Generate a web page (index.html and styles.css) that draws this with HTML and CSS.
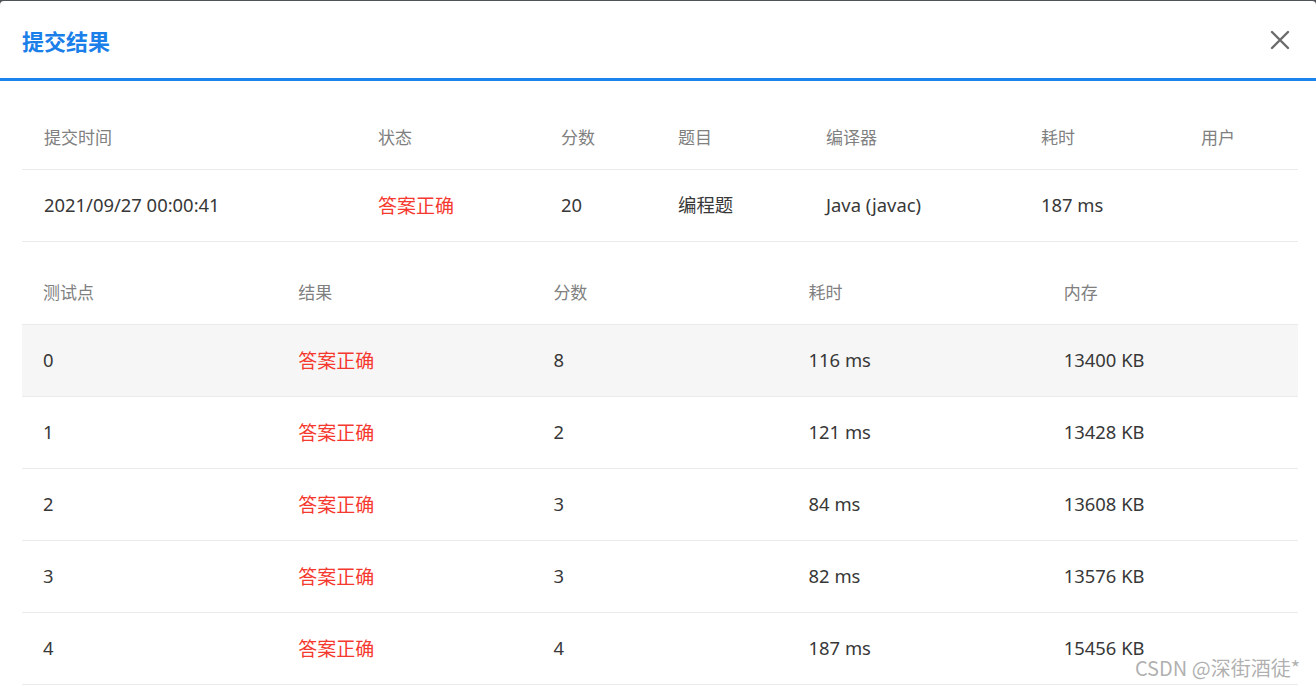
FILE: index.html
```html
<!DOCTYPE html>
<html lang="zh">
<head>
<meta charset="utf-8">
<title>提交结果</title>
<link rel="stylesheet" href="styles.css">
</head>
<body>
<div class="modal">
  <div class="modal-header">
    <h2 class="modal-title">提交结果</h2>
    <button class="close" aria-label="关闭">
      <svg width="20" height="20" viewBox="0 0 20 20"><path d="M2 2 L18 18 M18 2 L2 18" stroke="#6b6b6b" stroke-width="2.4" stroke-linecap="round" fill="none"/></svg>
    </button>
  </div>
  <div class="modal-body">
    <table class="tbl tbl-summary">
      <colgroup>
        <col class="c-time"><col class="c-status"><col class="c-score"><col class="c-problem"><col class="c-compiler"><col class="c-cost"><col class="c-user">
      </colgroup>
      <thead>
        <tr><th>提交时间</th><th>状态</th><th>分数</th><th>题目</th><th>编译器</th><th>耗时</th><th>用户</th></tr>
      </thead>
      <tbody>
        <tr><td>2021/09/27 00:00:41</td><td class="ok">答案正确</td><td>20</td><td>编程题</td><td>Java (javac)</td><td>187 ms</td><td></td></tr>
      </tbody>
    </table>
    <table class="tbl tbl-cases">
      <thead>
        <tr><th>测试点</th><th>结果</th><th>分数</th><th>耗时</th><th>内存</th></tr>
      </thead>
      <tbody>
        <tr class="hl"><td>0</td><td class="ok">答案正确</td><td>8</td><td>116 ms</td><td>13400 KB</td></tr>
        <tr><td>1</td><td class="ok">答案正确</td><td>2</td><td>121 ms</td><td>13428 KB</td></tr>
        <tr><td>2</td><td class="ok">答案正确</td><td>3</td><td>84 ms</td><td>13608 KB</td></tr>
        <tr><td>3</td><td class="ok">答案正确</td><td>3</td><td>82 ms</td><td>13576 KB</td></tr>
        <tr><td>4</td><td class="ok">答案正确</td><td>4</td><td>187 ms</td><td>15456 KB</td></tr>
      </tbody>
    </table>
  </div>
  <div class="watermark">CSDN @深街酒徒*</div>
</div>
</body>
</html>
```

FILE: styles.css
```css
html, body {
  margin: 0;
  padding: 0;
}
body {
  background: #4f5257;
  font-family: "Noto Sans", "Noto Sans CJK SC", sans-serif;
  overflow: hidden;
}
.modal {
  position: relative;
  margin-top: 1px;
  background: #fff;
  border-radius: 4px 4px 0 0;
  height: 685px;
  overflow: hidden;
}
.modal-header {
  height: 77px;
  display: flex;
  align-items: center;
  justify-content: space-between;
  padding: 0 22px;
  border-bottom: 3px solid #1a83ec;
}
.modal-title {
  margin: 0;
  font-family: "Noto Sans CJK SC", sans-serif;
  font-size: 22px;
  font-weight: 700;
  color: #1a7fe9;
  line-height: 1;
}
.close {
  border: 0;
  background: none;
  padding: 0;
  margin-right: 2px;
  width: 24px;
  height: 24px;
  display: flex;
  align-items: center;
  justify-content: center;
  cursor: pointer;
}
.modal-body {
  padding: 23px 18px 0 22px;
}
.tbl {
  width: 100%;
  border-collapse: collapse;
  table-layout: fixed;
}
.tbl th, .tbl td {
  text-align: left;
  padding: 0 0 0 22px;
  border-bottom: 1px solid #ebebeb;
  white-space: nowrap;
}
.tbl th {
  height: 64px;
  padding-bottom: 1px;
  font-family: "Noto Sans CJK SC", sans-serif;
  font-size: 17px;
  font-weight: 400;
  color: #808080;
}
.tbl td {
  height: 68px;
  padding-bottom: 3px;
  font-size: 18.4px;
  color: #383838;
}
.tbl td.ok {
  font-family: "Noto Sans CJK SC", sans-serif;
  font-size: 19px;
  color: #f5392f;
}
.tbl-cases {
  margin-top: 17px;
}
.tbl-cases th, .tbl-cases td {
  padding-left: 21px;
}
.tbl-cases tr.hl td {
  background: #f6f6f6;
}
.c-time { width: 334px; }
.c-status { width: 183px; }
.c-score { width: 117px; }
.c-problem { width: 148px; }
.c-compiler { width: 215px; }
.c-cost { width: 160px; }
.c-user { width: 119px; }
.watermark {
  position: absolute;
  right: 16px;
  bottom: 8px;
  font-family: "Noto Sans CJK SC", sans-serif;
  font-size: 20px;
  color: rgba(150, 150, 150, 0.75);
  line-height: 1;
}
```
